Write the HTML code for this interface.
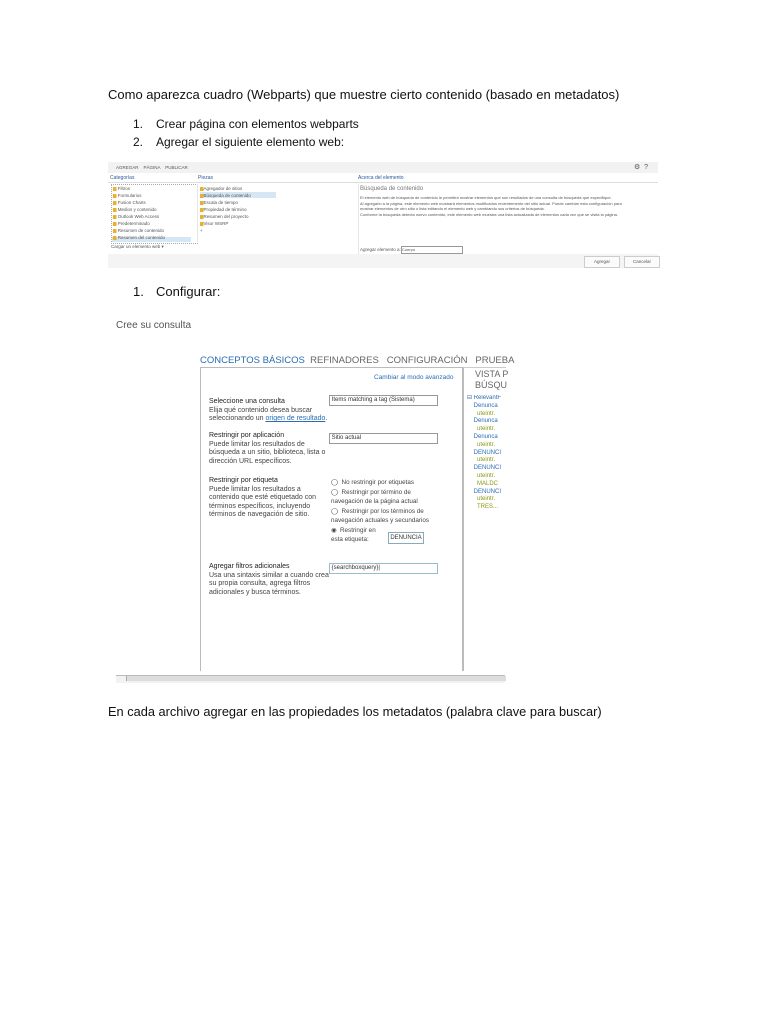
<!DOCTYPE html>
<html><head><meta charset="utf-8"><style>
body{margin:0;width:768px;height:1024px;background:#fff;position:relative;overflow:hidden;font-family:"Liberation Sans","DejaVu Sans",sans-serif;}
.a{position:absolute;white-space:nowrap;}
.m{font-size:13px;color:#111;}
.l{font-size:12px;color:#111;}
.s{font-size:4.5px;color:#555;}
.t{font-size:7px;color:#444;}
.b{color:#2a6db5;}
.g{color:#8a9a10;}
.f{color:#e8b030;}
</style></head><body>
<div class="a m" style="left:108px;top:87px">Como aparezca cuadro (Webparts) que muestre cierto contenido (basado en metadatos)</div>
<div class="a l" style="left:133px;top:117px">1.</div><div class="a l" style="left:156px;top:117px">Crear página con elementos webparts</div>
<div class="a l" style="left:133px;top:135px">2.</div><div class="a l" style="left:156px;top:135px">Agregar el siguiente elemento web:</div>

<div class="a" style="left:108px;top:162px;width:550px;height:11px;background:#f2f2f2"></div>
<div class="a s" style="left:116px;top:165px">AGREGAR &nbsp;&nbsp; PÁGINA &nbsp;&nbsp; PUBLICAR</div>
<div class="a" style="left:634px;top:163px;font-size:7px;color:#555">⚙ &nbsp;?</div>
<div class="a" style="left:110px;top:175px;font-size:5px;color:#2a5a9a">Categorías</div>
<div class="a" style="left:198px;top:175px;font-size:5px;color:#2a5a9a">Piezas</div>
<div class="a" style="left:358px;top:175px;font-size:5px;color:#2a5a9a">Acerca del elemento</div>
<div class="a" style="left:108px;top:182px;width:550px;height:1px;background:#ddd"></div>
<div class="a" style="left:111px;top:184px;width:85px;height:58px;border:1px dotted #aaa"></div>
<div class="a" style="left:112px;top:237px;width:79px;height:5px;background:#d5e6f5"></div>
<div class="a s" style="left:113px;top:185px;line-height:7px"><span class="f">▆</span> Filtros<br><span class="f">▆</span> Formularios<br><span class="f">▆</span> Fusion Charts<br><span class="f">▆</span> Medios y contenido<br><span class="f">▆</span> Outlook Web Access<br><span class="f">▆</span> Predeterminado<br><span class="f">▆</span> Resumen de contenido<br><span class="f">▆</span> Resumen del contenido</div>
<div class="a s" style="left:111px;top:244px">Cargar un elemento web ▾</div>
<div class="a" style="left:197px;top:184px;width:160px;height:58px;border-left:1px solid #e6e6e6;border-right:1px solid #e6e6e6"></div>
<div class="a" style="left:200px;top:192px;width:76px;height:6px;background:#d5e6f5"></div>
<div class="a s" style="left:200px;top:185px;line-height:7px"><span class="f">▆</span>Agregador de sitios<br><span class="f">▆</span>Búsqueda de contenido<br><span class="f">▆</span>Escala de tiempo<br><span class="f">▆</span>Propiedad de término<br><span class="f">▆</span>Resumen del proyecto<br><span class="f">▆</span>Visor WSRP<br>+</div>
<div class="a" style="left:358px;top:184px;width:300px;height:70px;border-left:1px solid #e6e6e6"></div>
<div class="a" style="left:360px;top:186px;font-size:6px;color:#777">Búsqueda de contenido</div>
<div class="a s" style="left:360px;top:195px;line-height:5.5px;font-size:4px">El elemento web de búsqueda de contenido le permitirá mostrar elementos que son resultados de una consulta de búsqueda que especifique.<br>Al agregarlo a la página, este elemento web mostrará elementos modificados recientemente del sitio actual. Puede cambiar esta configuración para<br>mostrar elementos de otro sitio o lista editando el elemento web y cambiando sus criterios de búsqueda.<br>Conforme la búsqueda detecta nuevo contenido, este elemento web muestra una lista actualizada de elementos cada vez que se visita la página.</div>
<div class="a s" style="left:360px;top:247px">Agregar elemento a: </div>
<div class="a" style="left:401px;top:246px;width:60px;height:6px;border:1px solid #999;font-size:4px;color:#555">Cuerpo</div>
<div class="a" style="left:108px;top:254px;width:550px;height:14px;background:#f4f4f4"></div>
<div class="a" style="left:584px;top:256px;width:34px;height:10px;border:1px solid #ccc;background:#fbfbfb;font-size:4.5px;color:#555;text-align:center;line-height:10px">Agregar</div>
<div class="a" style="left:624px;top:256px;width:34px;height:10px;border:1px solid #ccc;background:#fbfbfb;font-size:4.5px;color:#555;text-align:center;line-height:10px">Cancelar</div>

<div class="a l" style="left:133px;top:284px;font-size:13px">1.</div><div class="a l" style="left:156px;top:284px;font-size:13px">Configurar:</div>

<div class="a" style="left:116px;top:320px;font-size:10px;color:#555">Cree su consulta</div>
<div class="a" style="left:200px;top:355px;font-size:9.5px;color:#666"><span class="b">CONCEPTOS BÁSICOS</span> &nbsp;REFINADORES &nbsp; CONFIGURACIÓN &nbsp; PRUEBA</div>
<div class="a" style="left:200px;top:367px;width:261px;height:303px;border:1px solid #bbb;border-bottom:none"></div>
<div class="a" style="left:463px;top:367px;width:42px;height:303px;border-left:1px solid #bbb;border-top:1px solid #ccc"></div>
<div class="a b" style="left:374px;top:374px;font-size:6.5px">Cambiar al modo avanzado</div>
<div class="a t" style="left:209px;top:398px;line-height:8.5px"><span style="color:#222">Seleccione una consulta</span><br>Elija qué contenido desea buscar<br>seleccionando un <u class="b">origen de resultado</u>.</div>
<div class="a" style="left:329px;top:395px;width:107px;height:9px;border:1px solid #999;font-size:6px;color:#333;line-height:9px">&nbsp;Items matching a tag (Sistema)</div>
<div class="a t" style="left:209px;top:432px;line-height:8.5px"><span style="color:#222">Restringir por aplicación</span><br>Puede limitar los resultados de<br>búsqueda a un sitio, biblioteca, lista o<br>dirección URL específicos.</div>
<div class="a" style="left:329px;top:433px;width:107px;height:9px;border:1px solid #999;font-size:6px;color:#333;line-height:9px">&nbsp;Sitio actual</div>
<div class="a t" style="left:209px;top:477px;line-height:8.5px"><span style="color:#222">Restringir por etiqueta</span><br>Puede limitar los resultados a<br>contenido que esté etiquetado con<br>términos específicos, incluyendo<br>términos de navegación de sitio.</div>
<div class="a t" style="left:331px;top:478px;line-height:9.5px;font-size:6.3px">◯ &nbsp;No restringir por etiquetas<br>◯ &nbsp;Restringir por término de<br>navegación de la página actual<br>◯ &nbsp;Restringir por los términos de<br>navegación actuales y secundarios<br>◉ &nbsp;Restringir en<br>esta etiqueta:</div>
<div class="a" style="left:388px;top:532px;width:34px;height:10px;border:1px solid #8ab;font-size:6px;color:#333;line-height:10px;text-align:center">DENUNCIA</div>
<div class="a t" style="left:209px;top:563px;line-height:8.5px"><span style="color:#222">Agregar filtros adicionales</span><br>Usa una sintaxis similar a cuando crea<br>su propia consulta, agrega filtros<br>adicionales y busca términos.</div>
<div class="a" style="left:329px;top:563px;width:107px;height:9px;border:1px solid #9bc;font-size:6px;color:#333;line-height:9px">&nbsp;{searchboxquery}|</div>
<div class="a" style="left:475px;top:369px;font-size:9px;color:#666;line-height:11px">VISTA P<br>BÚSQU</div>
<div class="a" style="left:467px;top:395px;font-size:6px;line-height:7.8px;width:38px;overflow:hidden"><span class="b">⊟ RelevantF</span><br>&nbsp;&nbsp;&nbsp;&nbsp;<span class="b">Denunca</span><br>&nbsp;&nbsp;&nbsp;&nbsp;&nbsp;&nbsp;<span class="g">uteintr.</span><br>&nbsp;&nbsp;&nbsp;&nbsp;<span class="b">Denunca</span><br>&nbsp;&nbsp;&nbsp;&nbsp;&nbsp;&nbsp;<span class="g">uteintr.</span><br>&nbsp;&nbsp;&nbsp;&nbsp;<span class="b">Denunca</span><br>&nbsp;&nbsp;&nbsp;&nbsp;&nbsp;&nbsp;<span class="g">uteintr.</span><br>&nbsp;&nbsp;&nbsp;&nbsp;<span class="b">DENUNCI</span><br>&nbsp;&nbsp;&nbsp;&nbsp;&nbsp;&nbsp;<span class="g">uteintr.</span><br>&nbsp;&nbsp;&nbsp;&nbsp;<span class="b">DENUNCI</span><br>&nbsp;&nbsp;&nbsp;&nbsp;&nbsp;&nbsp;<span class="g">uteintr.</span><br>&nbsp;&nbsp;&nbsp;&nbsp;&nbsp;&nbsp;<span class="g">MALDC</span><br>&nbsp;&nbsp;&nbsp;&nbsp;<span class="b">DENUNCI</span><br>&nbsp;&nbsp;&nbsp;&nbsp;&nbsp;&nbsp;<span class="g">uteintr.</span><br>&nbsp;&nbsp;&nbsp;&nbsp;&nbsp;&nbsp;<span class="g">TRES...</span></div>
<div class="a" style="left:116px;top:675px;width:389px;height:7px;background:#f2f2f2;border-top:1px solid #bbb"></div>
<div class="a" style="left:126px;top:676px;width:379px;height:5px;background:#ddd;border-left:1px solid #aaa"></div>

<div class="a m" style="left:108px;top:704px;font-size:12.8px">En cada archivo agregar en las propiedades los metadatos (palabra clave para buscar)</div>
</body></html>
